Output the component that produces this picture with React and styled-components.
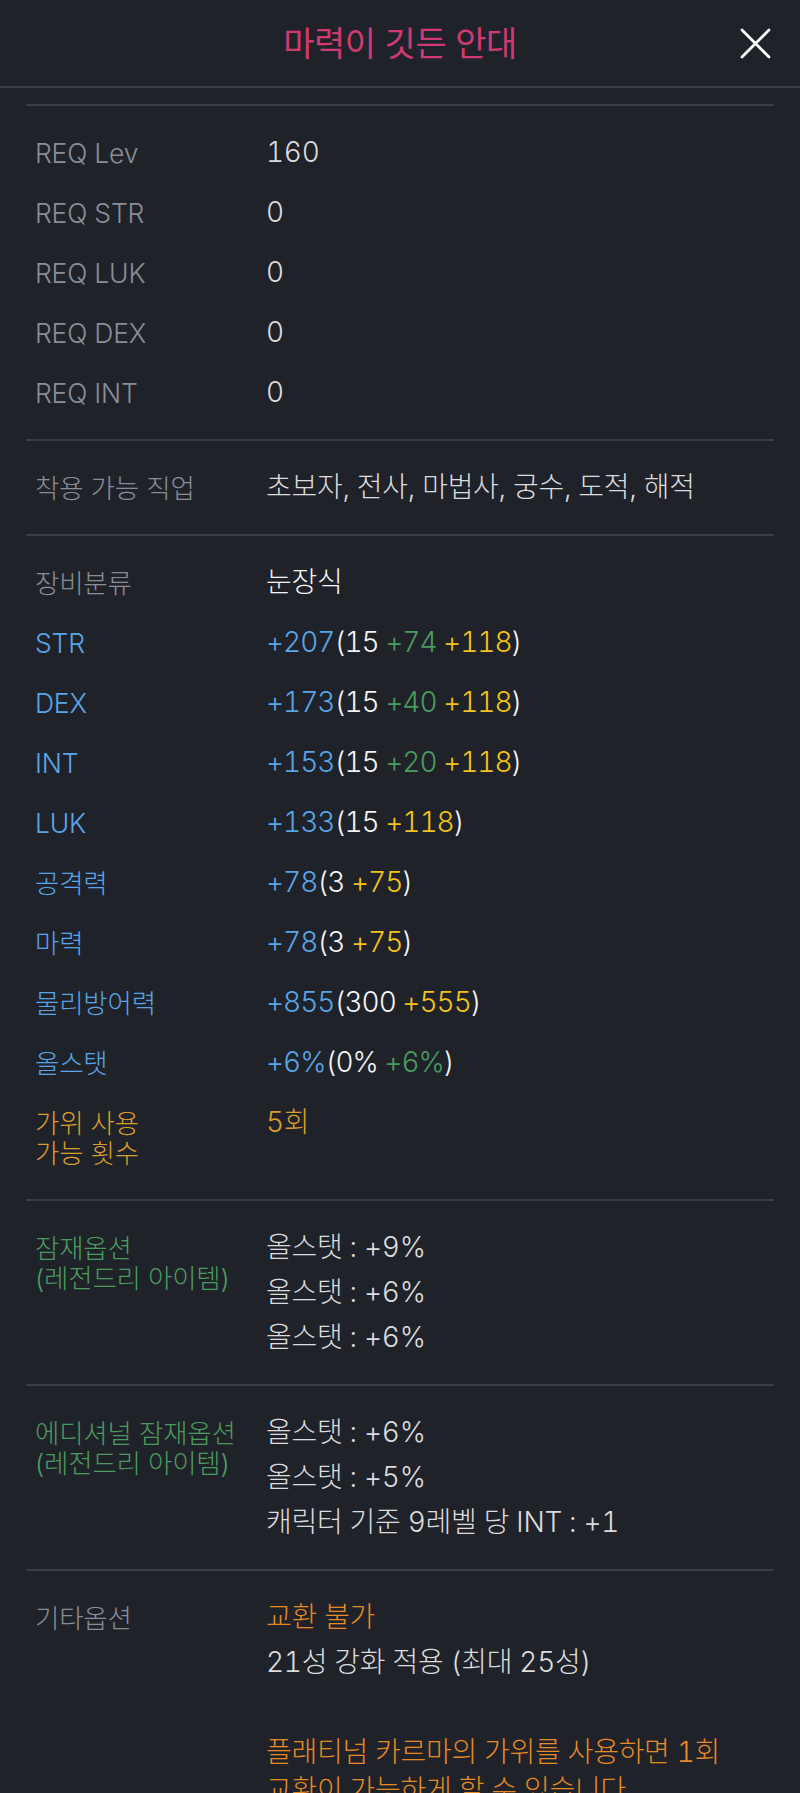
import React from "react";
import styled, { createGlobalStyle } from "styled-components";

const C = {
  bg: "#20222a",
  line: "#3b3e49",
  title: "#cf3a73",
  label: "#8b8e96",
  value: "#dcdcde",
  white: "#f4f4f4",
  blue: "#58a6e8",
  green: "#4b9b5f",
  yellow: "#f2c419",
  gold: "#d79f2c",
  orange: "#e58a24",
};

const GlobalStyle = createGlobalStyle`
  html, body { margin: 0; padding: 0; background: ${C.bg}; }
  body { font-family: Inter, "Noto Sans CJK KR", sans-serif; -webkit-font-smoothing: antialiased; }
  * { box-sizing: border-box; }
`;

const Page = styled.div`
  background: ${C.bg};
  min-height: 100vh;
  width: 800px;
  overflow: hidden;
`;

const Header = styled.header`
  height: 88px;
  border-bottom: 2px solid ${C.line};
  display: grid;
  grid-template-columns: 1fr auto 1fr;
  align-items: center;
`;

const Title = styled.h1`
  grid-column: 2;
  margin: 2px 0 0;
  font-family: Inter, "Noto Sans CJK KR", sans-serif;
  font-weight: 400;
  font-size: 34px;
  line-height: 42px;
  color: ${C.title};
  letter-spacing: -0.5px;
`;

const CloseButton = styled.button`
  grid-column: 3;
  justify-self: end;
  margin-right: 29px;
  width: 31px;
  height: 31px;
  padding: 0;
  border: 0;
  background: transparent;
  display: flex;
  align-items: center;
  justify-content: center;
  cursor: pointer;
`;

const Body = styled.main`
  padding: 16px 26px 0;
`;

const Section = styled.section`
  border-top: 2px solid ${C.line};
  padding: 16px 9px 17px;
`;

const Row = styled.div`
  display: grid;
  grid-template-columns: 231px 1fr;
  padding: 11px 0;
`;

const Label = styled.div`
  padding: 4.5px 0 3.5px;
  font-size: 26.5px;
  font-weight: 300;
  line-height: 30px;
  color: ${(p) => p.$color || C.label};
  white-space: pre-line;
  letter-spacing: -0.2px;
`;

const Values = styled.div`
  display: flex;
  flex-direction: column;
  gap: 7px;
`;

const Value = styled.div`
  font-size: 28px;
  font-weight: 300;
  line-height: 38px;
  min-height: 38px;
  color: ${(p) => p.$color || C.value};
  letter-spacing: ${(p) => (p.$tight ? "-1px" : "-0.3px")};
  font-feature-settings: "tnum" 1;
  word-break: keep-all;
`;

const Part = styled.span`
  color: ${(p) => p.$color};
`;

const CloseIcon = () => (
  <svg width="31" height="31" viewBox="0 0 31 31" fill="none">
    <path d="M2 2 L29 29 M29 2 L2 29" stroke="#ffffff" strokeWidth="2.7" strokeLinecap="round" />
  </svg>
);

const reqRows = [
  ["REQ Lev", "160"],
  ["REQ STR", "0"],
  ["REQ LUK", "0"],
  ["REQ DEX", "0"],
  ["REQ INT", "0"],
];

const statRows = [
  { label: "STR", total: "+207", base: "15", parts: [["+74", C.green], ["+118", C.yellow]] },
  { label: "DEX", total: "+173", base: "15", parts: [["+40", C.green], ["+118", C.yellow]] },
  { label: "INT", total: "+153", base: "15", parts: [["+20", C.green], ["+118", C.yellow]] },
  { label: "LUK", total: "+133", base: "15", parts: [["+118", C.yellow]] },
  { label: "공격력", total: "+78", base: "3", parts: [["+75", C.yellow]] },
  { label: "마력", total: "+78", base: "3", parts: [["+75", C.yellow]] },
  { label: "물리방어력", total: "+855", base: "300", parts: [["+555", C.yellow]] },
  { label: "올스탯", total: "+6%", base: "0%", parts: [["+6%", C.green]] },
];

const StatValue = ({ total, base, parts }) => (
  <Value $color={C.white} $tight>
    <Part $color={C.blue}>{total}</Part>
    <Part $color={C.white}>({base}</Part>
    {parts.map(([t, c], i) => (
      <Part key={i} $color={c}>{" " + t}</Part>
    ))}
    <Part $color={C.white}>)</Part>
  </Value>
);

export default function App() {
  return (
    <Page>
      <GlobalStyle />
      <Header>
        <Title>마력이 깃든 안대</Title>
        <CloseButton aria-label="닫기">
          <CloseIcon />
        </CloseButton>
      </Header>
      <Body>
        <Section>
          {reqRows.map(([l, v]) => (
            <Row key={l}>
              <Label>{l}</Label>
              <Values>
                <Value>{v}</Value>
              </Values>
            </Row>
          ))}
        </Section>
        <Section>
          <Row>
            <Label>착용 가능 직업</Label>
            <Values>
              <Value>초보자, 전사, 마법사, 궁수, 도적, 해적</Value>
            </Values>
          </Row>
        </Section>
        <Section>
          <Row>
            <Label>장비분류</Label>
            <Values>
              <Value $color={C.white}>눈장식</Value>
            </Values>
          </Row>
          {statRows.map((s) => (
            <Row key={s.label}>
              <Label $color={C.blue}>{s.label}</Label>
              <Values>
                <StatValue {...s} />
              </Values>
            </Row>
          ))}
          <Row>
            <Label $color={C.gold}>{"가위 사용\n가능 횟수"}</Label>
            <Values>
              <Value $color={C.gold}>5회</Value>
            </Values>
          </Row>
        </Section>
        <Section>
          <Row>
            <Label $color={C.green}>{"잠재옵션\n(레전드리 아이템)"}</Label>
            <Values>
              <Value>올스탯 : +9%</Value>
              <Value>올스탯 : +6%</Value>
              <Value>올스탯 : +6%</Value>
            </Values>
          </Row>
        </Section>
        <Section>
          <Row>
            <Label $color={C.green}>{"에디셔널 잠재옵션\n(레전드리 아이템)"}</Label>
            <Values>
              <Value>올스탯 : +6%</Value>
              <Value>올스탯 : +5%</Value>
              <Value>캐릭터 기준 9레벨 당 INT : +1</Value>
            </Values>
          </Row>
        </Section>
        <Section>
          <Row>
            <Label>기타옵션</Label>
            <Values>
              <Value $color={C.orange}>교환 불가</Value>
              <Value>21성 강화 적용 (최대 25성)</Value>
              <Value />
              <Value $color={C.orange}>플래티넘 카르마의 가위를 사용하면 1회 교환이 가능하게 할 수 있습니다.</Value>
            </Values>
          </Row>
        </Section>
      </Body>
    </Page>
  );
}
